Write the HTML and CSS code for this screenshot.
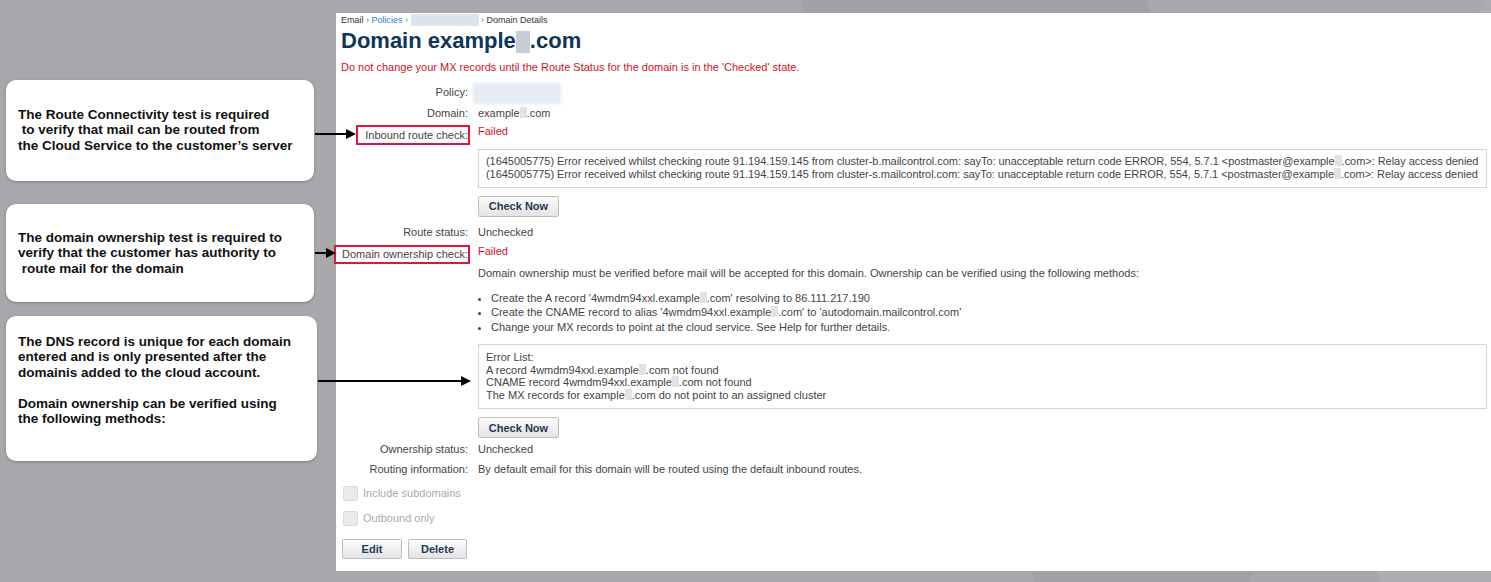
FILE: index.html
```html
<!DOCTYPE html>
<html>
<head>
    <title>Domain Details</title>
    <meta name="viewport" content="width=device-width, initial-scale=1.0">
    <link rel="stylesheet" href="styles.css">
</head>
<body>
<div class="callouts">
    <div class="callout callout-route">
        The Route Connectivity test is required<br>
        &nbsp;to verify that mail can be routed from<br>
        the Cloud Service to the customer’s server
    </div>
    <div class="callout callout-owner">
        The domain ownership test is required to<br>
        verify that the customer has authority to<br>
        &nbsp;route mail for the domain
    </div>
    <div class="callout callout-dns">
        The DNS record is unique for each domain<br>
        entered and is only presented after the<br>
        domainis added to the cloud account.<br>
        <br>
        Domain ownership can be verified using<br>
        the following methods:
    </div>
</div>

<div class="panel">
    <div class="breadcrumb">
        Email <span class="sep">›</span> <a href="#">Policies</a> <span class="sep">›</span>
        <span class="crumb-blur"></span> <span class="sep">›</span> Domain Details
    </div>
    <h1 class="title">Domain example<span class="title-blur"></span>.com</h1>
    <p class="notice">Do not change your MX records until the Route Status for the domain is in the 'Checked' state.</p>

    <div class="row row-policy">
        <div class="label">Policy:</div>
        <div class="value"><span class="policy-blur"></span></div>
    </div>
    <div class="row">
        <div class="label">Domain:</div>
        <div class="value">example<span class="redact"></span>.com</div>
    </div>
    <div class="row">
        <div class="label"><span class="flagged flagged-inbound">Inbound route check:</span></div>
        <div class="value failed">Failed</div>
    </div>
    <div class="detail msg-box route-errors">
        (1645005775) Error received whilst checking route 91.194.159.145 from cluster-b.mailcontrol.com: sayTo: unacceptable return code ERROR, 554, 5.7.1 &lt;postmaster@example<span class="redact"></span>.com&gt;: Relay access denied<br>
        (1645005775) Error received whilst checking route 91.194.159.145 from cluster-s.mailcontrol.com: sayTo: unacceptable return code ERROR, 554, 5.7.1 &lt;postmaster@example<span class="redact"></span>.com&gt;: Relay access denied
    </div>
    <div class="detail"><button class="btn btn-check">Check Now</button></div>
    <div class="row row-route-status">
        <div class="label">Route status:</div>
        <div class="value">Unchecked</div>
    </div>
    <div class="row row-owner">
        <div class="label"><span class="flagged flagged-owner">Domain ownership check:</span></div>
        <div class="value failed">Failed</div>
    </div>
    <div class="detail desc">Domain ownership must be verified before mail will be accepted for this domain. Ownership can be verified using the following methods:</div>
    <ul class="detail methods">
        <li>Create the A record '4wmdm94xxl.example<span class="redact"></span>.com' resolving to 86.111.217.190</li>
        <li>Create the CNAME record to alias '4wmdm94xxl.example<span class="redact"></span>.com' to 'autodomain.mailcontrol.com'</li>
        <li>Change your MX records to point at the cloud service. See Help for further details.</li>
    </ul>
    <div class="detail msg-box owner-errors">
        Error List:<br>
        A record 4wmdm94xxl.example<span class="redact"></span>.com not found<br>
        CNAME record 4wmdm94xxl.example<span class="redact"></span>.com not found<br>
        The MX records for example<span class="redact"></span>.com do not point to an assigned cluster
    </div>
    <div class="detail"><button class="btn btn-check btn-check2">Check Now</button></div>
    <div class="row row-own-status">
        <div class="label">Ownership status:</div>
        <div class="value">Unchecked</div>
    </div>
    <div class="row row-routing">
        <div class="label">Routing information:</div>
        <div class="value">By default email for this domain will be routed using the default inbound routes.</div>
    </div>
    <label class="option option-sub"><span class="box"></span>Include subdomains</label>
    <label class="option option-out"><span class="box"></span>Outbound only</label>
    <div class="actions">
        <button class="btn btn-edit">Edit</button>
        <button class="btn btn-delete">Delete</button>
    </div>
</div>

<svg class="arrow arrow-route" width="42" height="12" viewBox="0 0 42 12"><path d="M0 6H33" stroke="#000" stroke-width="2"/><path d="M31 1L41 6L31 11Z" fill="#000"/></svg>
<svg class="arrow arrow-owner" width="22" height="12" viewBox="0 0 22 12"><path d="M0 6H13" stroke="#000" stroke-width="2"/><path d="M11 1L21 6L11 11Z" fill="#000"/></svg>
<svg class="arrow arrow-dns" width="154" height="12" viewBox="0 0 154 12"><path d="M0 6H145" stroke="#000" stroke-width="2"/><path d="M143 1L153 6L143 11Z" fill="#000"/></svg>
</body>
</html>
```

FILE: styles.css
```css
body { margin: 0; height: 582px; display: flex; position: relative; overflow: hidden; font-family: "Liberation Sans", Arial, sans-serif; color: #444;
    background: linear-gradient(112deg, transparent 0 86%, rgba(255,255,255,0.06) 86% 100%), linear-gradient(68deg, transparent 0 60%, rgba(0,0,0,0.04) 60% 80%, transparent 80%), #a8a7ac; }

/* left annotation cards */
.callouts { width: 336px; flex: none; display: flex; flex-direction: column; }
.callout { background: #fff; border-radius: 10px; box-shadow: 0 1px 3px rgba(0,0,0,0.25); margin-left: 6px; width: 308px; box-sizing: border-box;
    padding-left: 12px; font-size: 13.5px; font-weight: bold; line-height: 15.4px; color: #111; }
.callout-route { margin-top: 80px; height: 101px; padding-top: 27px; }
.callout-owner { margin-top: 23px; height: 98px; padding-top: 26px; }
.callout-dns { margin-top: 14px; height: 145px; padding-top: 18px; width: 311px; }

.arrow { position: absolute; }
.arrow-route { left: 315px; top: 128px; }
.arrow-owner { left: 315px; top: 247px; }
.arrow-dns { left: 318px; top: 375px; }

/* main panel */
.panel { flex: 1; min-width: 0; margin-top: 13px; height: 558px; background: #fff; box-sizing: border-box; padding: 1px 4px 0 5px; font-size: 11px; }
.breadcrumb { font-size: 9px; line-height: 13px; color: #333; }
.breadcrumb a { color: #2a7fd0; text-decoration: none; }
.breadcrumb .sep { color: #777; }
.crumb-blur { display: inline-block; width: 68px; height: 12px; vertical-align: -3px; background: #dde3ea; filter: blur(0.6px); }
.title { margin: 0; font-size: 22px; line-height: 28px; color: #0d3658; }
.title-blur { display: inline-block; width: 14px; height: 22px; vertical-align: -5px; background: #c7cdd4; }
.notice { margin: 5px 0 0; line-height: 14px; color: #cf1424; }

.row { display: flex; gap: 10px; line-height: 18px; align-items: flex-start; }
.label { width: 127px; flex: none; display: flex; justify-content: flex-end; white-space: nowrap; }
.row-policy { margin-top: 7px; line-height: 22px; }
.policy-blur { display: inline-block; width: 88px; height: 21px; margin-left: -5px; vertical-align: middle; background: #e5ecf4; filter: blur(1.5px); }
.redact { display: inline-block; width: 7px; height: 11px; vertical-align: -1px; background: #e2e2e2; }
.failed { color: #cf1424; }
.flagged { border: 2px solid #e0163d; margin-right: -2px; margin-top: 3px; }
.flagged-inbound { padding-left: 7px; line-height: 16px; }
.flagged-owner { padding-left: 6px; line-height: 15px; }
.row-route-status { margin-top: 6px; }
.row-owner { margin-top: 1px; }

.detail { margin-left: 137px; }
.msg-box { border: 1px solid #d4d4d4; }
.route-errors { margin-top: 4px; padding: 5px 4px 6px 7px; line-height: 13px; white-space: nowrap; letter-spacing: -0.04px; overflow: hidden; }
.owner-errors { margin-top: 10px; padding: 6px 8px 7px 7px; line-height: 12.5px; }
.desc { line-height: 18px; }
.methods { margin-top: 9px; margin-bottom: 0; padding-left: 13px; line-height: 14.5px; }

.btn { font-family: "Liberation Sans", Arial, sans-serif; font-size: 11px; font-weight: bold; color: #1d3a56; height: 21px; padding: 0; border: 1px solid #bdbdbd; border-radius: 2px;
    background: linear-gradient(#fbfbfb, #e4e4e4); }
.btn-check { width: 81px; margin-top: 8px; display: block; }
.row-own-status { margin-top: 2px; }
.row-routing { margin-top: 2px; }

.option { display: flex; align-items: center; gap: 5px; margin-left: 2px; line-height: 18px; color: #aaa; }
.option .box { width: 13px; height: 13px; border: 1px solid #dadada; border-radius: 2px; background: #ebebeb; }
.option-sub { margin-top: 6px; }
.option-out { margin-top: 7px; }
.actions { display: flex; gap: 6px; margin-top: 12px; margin-left: 1px; }
.btn-edit { width: 60px; height: 20px; }
.btn-delete { width: 59px; height: 20px; }
```
